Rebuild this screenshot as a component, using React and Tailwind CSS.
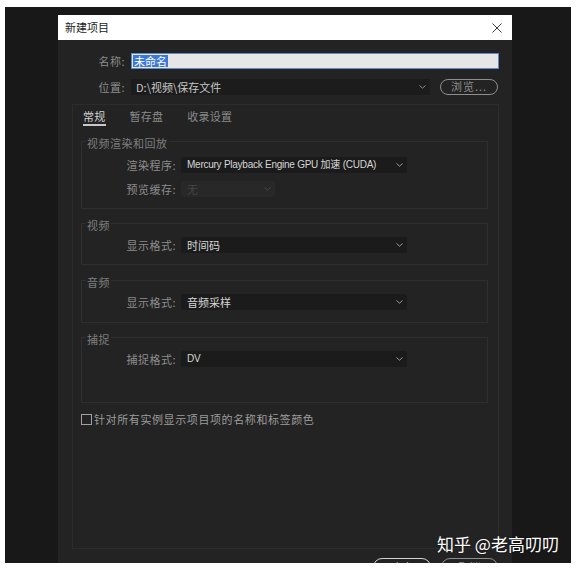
import React from 'react';

const cjk = "font-['Noto_Sans_CJK_SC','Noto_Sans',sans-serif]";
const latin = "font-['Liberation_Sans','Noto_Sans_CJK_SC',sans-serif]";

const Chevron = ({ className = 'text-[#9a9a9a]' }) => (
    <svg width="7" height="4" viewBox="0 0 7 4" className={className}>
        <path d="M0.5 0.5 L3.5 3.2 L6.5 0.5" fill="none" stroke="currentColor" strokeWidth="1" />
    </svg>
);

const Dropdown = ({ value, width = 'w-[226px]', mono = false }) => (
    <div className={`flex h-4 ${width} items-center justify-between rounded-[2px] bg-[#1b1b1b] pl-[6px] pr-[4px]`}>
        <span className={`${mono ? `${latin} text-[10px] tracking-[-0.25px]` : `${cjk} text-[11px]`} whitespace-nowrap leading-4 text-[#d6d6d6]`}>{value}</span>
        <Chevron />
    </div>
);

const Row = ({ label, children }) => (
    <div className="flex items-center gap-[5px]">
        <span className="w-[94px] text-right text-[11px] leading-4 tracking-[0.5px] text-[#8c8c8c]">{label}</span>
        {children}
    </div>
);

const Group = ({ title, className, children }) => (
    <fieldset className={`ml-[8px] w-[407px] border border-[#2f2f2f] ${className}`}>
        <legend className="ml-[4px] h-[14px] px-[1px] text-[11px] leading-[14px] tracking-[0.5px] text-[#7e7e7e]">
            <span className="relative top-[2px]">{title}</span>
        </legend>
        {children}
    </fieldset>
);

export default function App() {
    return (
        <div className={`relative h-[571px] w-[578px] bg-white pt-[7px] pl-[5px] ${cjk}`}>
            <div className="h-[556px] w-[566px] overflow-hidden bg-[#181818] pt-[8px] pl-[53px]">
                <div className="w-[454px]">
                    {/* title bar */}
                    <div className="flex h-[25px] items-center justify-between bg-white pl-[7px] pr-[10px]">
                        <span className="text-[11px] text-[#1c1c1c]">新建项目</span>
                        <svg width="10" height="10" viewBox="0 0 10 10" className="text-[#3a3a3a]">
                            <path d="M0.5 0.5 L9.5 9.5 M9.5 0.5 L0.5 9.5" stroke="currentColor" strokeWidth="1" />
                        </svg>
                    </div>

                    <div className="h-[531px] bg-[#232323] pt-[13px]">
                        {/* name */}
                        <div className="flex items-center gap-[6px] pl-[17px]">
                            <span className="w-[50px] text-right text-[11px] tracking-[0.5px] text-[#8c8c8c]">名称:</span>
                            <div className="flex h-4 w-[368px] items-center border border-[#5d8cc4] bg-[#e6e6e6] pl-[1px]">
                                <span className="bg-[#3b78d8] px-[1px] text-[11px] leading-[12px] text-white">未命名</span>
                            </div>
                        </div>

                        {/* location */}
                        <div className="mt-[9px] flex items-center gap-[6px] pl-[17px]">
                            <span className="w-[50px] text-right text-[11px] tracking-[0.5px] text-[#8c8c8c]">位置:</span>
                            <div className="flex h-4 w-[299px] items-center justify-between bg-[#1c1c1c] pl-[5px] pr-[4px]">
                                <span className="text-[11px] leading-4 text-[#c6c6c6]">D:\视频\保存文件</span>
                                <Chevron className="text-[#8a8a8a]" />
                            </div>
                            <button className="ml-[4px] flex h-4 w-[58px] items-center justify-center rounded-full border border-[#8e8e8e] text-[11px] leading-none tracking-[1px] text-[#8e8e8e]">
                                浏览...
                            </button>
                        </div>

                        {/* tab panel */}
                        <div className="mt-[9px] ml-[14px] h-[445px] w-[427px] border border-[#2c2c2c]">
                            <div className="flex gap-[24px] pt-[4px] pl-[10px] text-[11px] tracking-[0.25px]">
                                <span className="border-b-2 border-[#c8c8c8] pb-[1px] leading-[14px] text-[#d2d2d2]">常规</span>
                                <span className="leading-[14px] text-[#8a8a8a]">暂存盘</span>
                                <span className="leading-[14px] text-[#8a8a8a]">收录设置</span>
                            </div>

                            <Group title="视频渲染和回放" className="mt-[8px] pt-[9px] pb-[11px]">
                                <Row label="渲染程序:">
                                    <Dropdown mono value="Mercury Playback Engine GPU 加速 (CUDA)" />
                                </Row>
                                <div className="mt-[8px]">
                                    <Row label="预览缓存:">
                                        <div className="flex h-4 w-[94px] items-center justify-between rounded-[2px] bg-[#282828] pl-[6px] pr-[4px]">
                                            <span className="text-[11px] leading-4 text-[#454545]">无</span>
                                            <Chevron className="text-[#474747]" />
                                        </div>
                                    </Row>
                                </div>
                            </Group>

                            <Group title="视频" className="mt-[7px] pt-[7px] pb-[11px]">
                                <Row label="显示格式:">
                                    <Dropdown value="时间码" />
                                </Row>
                            </Group>

                            <Group title="音频" className="mt-[8px] pt-[7px] pb-[12px]">
                                <Row label="显示格式:">
                                    <Dropdown value="音频采样" />
                                </Row>
                            </Group>

                            <Group title="捕捉" className="mt-[7px] pt-[7px] pb-[35px]">
                                <Row label="捕捉格式:">
                                    <Dropdown mono value="DV" />
                                </Row>
                            </Group>

                            <label className="mt-[10px] ml-[8px] flex items-center gap-[2px]">
                                <span className="h-[11px] w-[11px] border-[1.5px] border-[#a0a0a0]" />
                                <span className="text-[11px] leading-[12px] tracking-[0.6px] text-[#9c9c9c]">针对所有实例显示项目项的名称和标签颜色</span>
                            </label>
                        </div>

                        {/* bottom buttons */}
                        <div className="mt-[9px] flex justify-end gap-[10px] pr-[14px]">
                            <button className="h-[18px] w-[58px] rounded-full border border-[#d2d2d2] text-[11px] text-[#d2d2d2]">确定</button>
                            <button className="h-[18px] w-[57px] rounded-full border border-[#8e8e8e] text-[11px] text-[#8e8e8e]">取消</button>
                        </div>
                    </div>
                </div>
            </div>

            {/* watermark */}
            <div className="absolute top-[532px] left-[437px] text-[17px] leading-[24px] text-white [text-shadow:0_0_2px_rgba(0,0,0,0.6)]">
                知乎 @老高叨叨
            </div>
        </div>
    );
}
